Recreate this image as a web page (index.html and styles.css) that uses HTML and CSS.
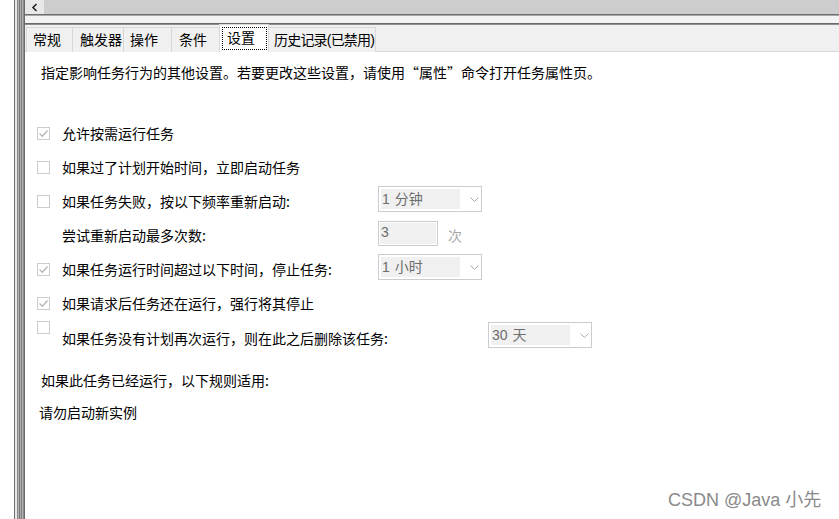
FILE: index.html
```html
<!DOCTYPE html>
<html lang="zh-CN">
<head>
<meta charset="utf-8">
<title>设置</title>
<link rel="stylesheet" href="styles.css">
</head>
<body>
<div class="page">
  <div class="gutter"></div>
  <div class="frame-edge"></div>
  <div class="main">
    <div class="hscroll">
      <div class="scroll-btn">
        <svg width="8" height="9" viewBox="0 0 8 9"><path d="M5.5 1 L2 4.5 L5.5 8" fill="none" stroke="#222" stroke-width="1.6"/></svg>
      </div>
    </div>
    <div class="rule"></div>
    <div class="band"></div>
    <div class="rule thick"></div>
    <div class="tabstrip">
      <div class="tab w-general">常规</div>
      <div class="tab w-trigger">触发器</div>
      <div class="tab w-action">操作</div>
      <div class="tab w-cond">条件</div>
      <div class="tab w-set active"><span class="focus">设置</span></div>
      <div class="tab w-hist">历史记录(已禁用)</div>
    </div>
    <div class="content">
      <p class="intro">指定影响任务行为的其他设置。若要更改这些设置，请使用“属性”命令打开任务属性页。</p>

      <div class="row">
        <span class="cb checked"><svg viewBox="0 0 13 13"><path d="M2.5 6.5 L5.3 9.3 L10.5 3.5" fill="none" stroke="#b4b4b4" stroke-width="1.3"/></svg></span>
        <span class="label">允许按需运行任务</span>
      </div>
      <div class="row">
        <span class="cb"></span>
        <span class="label">如果过了计划开始时间，立即启动任务</span>
      </div>
      <div class="row">
        <span class="cb"></span>
        <span class="label">如果任务失败，按以下频率重新启动:</span>
        <div class="select"><span class="sel-val">1 分钟</span><svg class="chev" width="9" height="5" viewBox="0 0 9 5"><path d="M0.5 0.5 L4.5 4.5 L8.5 0.5" fill="none" stroke="#a8a8a8" stroke-width="1"/></svg></div>
      </div>
      <div class="row">
        <span class="cb blank"></span>
        <span class="label">尝试重新启动最多次数:</span>
        <div class="spin"><span class="sel-val">3</span></div>
        <span class="unit">次</span>
      </div>
      <div class="row">
        <span class="cb checked"><svg viewBox="0 0 13 13"><path d="M2.5 6.5 L5.3 9.3 L10.5 3.5" fill="none" stroke="#b4b4b4" stroke-width="1.3"/></svg></span>
        <span class="label">如果任务运行时间超过以下时间，停止任务:</span>
        <div class="select"><span class="sel-val">1 小时</span><svg class="chev" width="9" height="5" viewBox="0 0 9 5"><path d="M0.5 0.5 L4.5 4.5 L8.5 0.5" fill="none" stroke="#a8a8a8" stroke-width="1"/></svg></div>
      </div>
      <div class="row">
        <span class="cb checked"><svg viewBox="0 0 13 13"><path d="M2.5 6.5 L5.3 9.3 L10.5 3.5" fill="none" stroke="#b4b4b4" stroke-width="1.3"/></svg></span>
        <span class="label">如果请求后任务还在运行，强行将其停止</span>
      </div>
      <div class="row top">
        <span class="cb"></span>
        <span class="label wide">如果任务没有计划再次运行，则在此之后删除该任务:</span>
        <div class="select"><span class="sel-val">30 天</span><svg class="chev" width="9" height="5" viewBox="0 0 9 5"><path d="M0.5 0.5 L4.5 4.5 L8.5 0.5" fill="none" stroke="#a8a8a8" stroke-width="1"/></svg></div>
      </div>

      <p class="rule-title">如果此任务已经运行，以下规则适用:</p>
      <p class="rule-value">请勿启动新实例</p>
    </div>
  </div>
  <div class="watermark">CSDN @Java 小先</div>
</div>
</body>
</html>
```

FILE: styles.css
```css
* { box-sizing: border-box; }
html, body {
  margin: 0;
  padding: 0;
  background: #ffffff;
}
body {
  font-family: "Noto Sans CJK SC", "Noto Sans", sans-serif;
  font-size: 14px;
  color: #000;
}
.page {
  position: relative;
  width: 839px;
  height: 519px;
  overflow: hidden;
  display: flex;
}
.gutter {
  width: 14px;
  flex: none;
  background: #fff;
}
.frame-edge {
  width: 11px;
  flex: none;
  background: linear-gradient(to right,
    #6f6f6f 0, #6f6f6f 1px,
    #e6e6e6 1px, #e6e6e6 3px,
    #8a8a8a 3px, #8a8a8a 4px,
    #b0b0b0 4px, #b0b0b0 5px,
    #7c7c7c 5px, #7c7c7c 6px,
    #a9a9a9 6px, #a9a9a9 7px,
    #808080 7px, #808080 8px,
    #b3b3b3 8px, #b3b3b3 9px,
    #8c8c8c 9px, #8c8c8c 10px,
    #6a6a6a 10px, #6a6a6a 11px);
}
.main {
  flex: 1;
  display: flex;
  flex-direction: column;
  min-width: 0;
}
.hscroll {
  height: 14px;
  background: #cdcdcd;
  display: flex;
}
.scroll-btn {
  width: 19px;
  height: 14px;
  background: #e8e8e8;
  display: flex;
  align-items: center;
  justify-content: center;
}
.rule {
  height: 2px;
  background: linear-gradient(#6e6e6e 0, #6e6e6e 1px, #a8a8a8 1px);
}
.rule.thick {
  background: linear-gradient(#6a6a6a 0, #6a6a6a 1px, #8e8e8e 1px);
}
.band {
  height: 7px;
  background: #f3f3f3;
}
.tabstrip {
  height: 27px;
  background: #f0f0f0;
  border-bottom: 1px solid #d9d9d9;
  display: flex;
  align-items: flex-end;
  padding-left: 1px;
  font-family: "Liberation Sans", "Noto Sans CJK SC", sans-serif;
}
.tab {
  height: 25px;
  margin-bottom: -1px;
  border: 1px solid #d9d9d9;
  border-bottom: none;
  border-left: none;
  background: #f0f0f0;
  line-height: 24px;
  padding-left: 6px;
  white-space: nowrap;
  flex: none;
  overflow: hidden;
}
.tab:first-child { border-left: 1px solid #d9d9d9; }
.w-general { width: 47px; }
.w-trigger { width: 51px; padding-left: 7px; }
.w-action { width: 48px; }
.w-cond { width: 48px; padding-left: 7px; }
.w-set { width: 50px; }
.w-hist { width: 107px; padding-left: 5px; letter-spacing: -0.8px; }
.tab.active {
  height: 28px;
  background: #ffffff;
  border-left: 1px solid #d9d9d9;
  margin-left: -1px;
  padding: 2px 2px 0 2px;
  line-height: 20px;
  position: relative;
  z-index: 1;
}
.focus {
  display: block;
  border: 1px dotted #000;
  height: 23px;
  width: 45px;
  padding-left: 4px;
  line-height: 21px;
}
.content {
  flex: 1;
  background: #fff;
  padding: 10px 0 0 0;
}
p { margin: 0; }
.intro {
  line-height: 20px;
  padding-left: 16px;
  margin-bottom: 34px;
  white-space: nowrap;
}
.row {
  height: 34px;
  display: flex;
  align-items: center;
  padding-left: 12px;
}
.row.top {
  align-items: flex-start;
}
.cb {
  width: 13px;
  height: 13px;
  flex: none;
  border: 1px solid #cccccc;
  background: #fff;
  margin-right: 12px;
  position: relative;
}
.cb svg {
  position: absolute;
  left: -1px;
  top: -1px;
  width: 13px;
  height: 13px;
}
.cb.blank { border-color: transparent; }
.row.top .cb { margin-top: 1px; }
.label {
  width: 316px;
  flex: none;
  line-height: 20px;
  white-space: nowrap;
}
.label.wide {
  width: 426px;
  padding-top: 8px;
}
.select {
  width: 104px;
  height: 26px;
  flex: none;
  border: 1px solid #cccccc;
  padding: 2px;
  display: flex;
  align-items: center;
  margin-bottom: 4px;
}
.row.top .select { margin-top: 2px; margin-bottom: 0; }
.sel-val {
  width: 79px;
  height: 20px;
  background: #f0f0f0;
  color: #6d6d6d;
  line-height: 20px;
  padding-left: 1px;
  font-size: 14px;
  font-family: "Liberation Sans", "Noto Sans CJK SC", sans-serif;
  word-spacing: 1px;
  white-space: pre;
}
.chev {
  margin-left: 10px;
}
.spin {
  width: 60px;
  height: 25px;
  flex: none;
  border: 1px solid #cccccc;
  padding: 1px;
  margin-bottom: 4px;
  display: flex;
}
.spin .sel-val {
  width: 56px;
  height: 21px;
  line-height: 18px;
  padding-left: 1px;
}
.unit {
  margin-left: 10px;
  color: #a6a6a6;
  line-height: 20px;
}
.rule-title {
  line-height: 20px;
  padding-left: 16px;
  margin-top: 16px;
}
.rule-value {
  line-height: 20px;
  padding-left: 14px;
  margin-top: 12px;
}
.watermark {
  position: absolute;
  left: 668px;
  top: 488px;
  font-family: "Liberation Sans", "Noto Sans CJK SC", sans-serif;
  font-size: 18px;
  line-height: 24px;
  color: #8a8a8a;
  text-shadow: 0 0 1px #ffffff;
  white-space: nowrap;
}
```
